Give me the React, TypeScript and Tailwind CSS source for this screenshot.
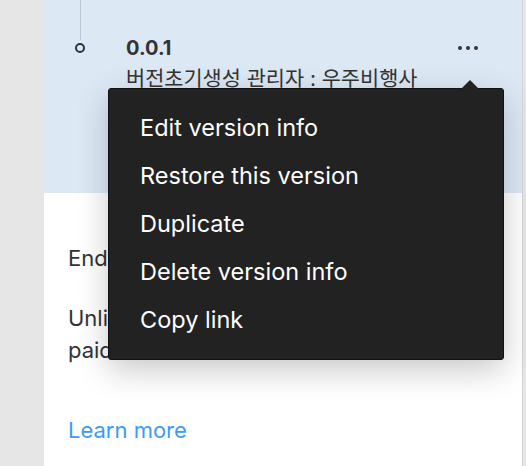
import React from "react";

const menuItems = [
  "Edit version info",
  "Restore this version",
  "Duplicate",
  "Delete version info",
  "Copy link",
];

export default function App() {
  return (
    <div
      className="relative flex h-[466px] w-[526px] overflow-hidden bg-[#e6e6e6]"
      style={{ fontFamily: "Inter, 'Noto Sans CJK KR', sans-serif" }}
    >
      <div className="w-[44px] shrink-0" />
      <div className="flex w-[479px] flex-col border-r border-[#d4d4d4] bg-white">
        {/* current version */}
        <div className="flex h-[193px] bg-[#dce9f5]">
          <div className="flex w-[72px] flex-col items-center">
            <div className="h-[40px] w-px bg-[#b9c6d3]" />
            <div className="mt-[3px] h-[10px] w-[10px] rounded-full border-2 border-[#333] bg-[#dce9f5]" />
          </div>
          <div className="flex flex-1 flex-col pt-[34px] pl-[10px]">
            <div className="flex items-center justify-between pr-[44px]">
              <span className="text-[20px] font-bold leading-[28px] text-[#333]">0.0.1</span>
              <div className="flex gap-[4px]">
                <span className="h-[4px] w-[4px] rounded-full bg-[#333]" />
                <span className="h-[4px] w-[4px] rounded-full bg-[#333]" />
                <span className="h-[4px] w-[4px] rounded-full bg-[#333]" />
              </div>
            </div>
            <div className="mt-[3px] text-[20.8px] leading-[28px] text-[#333]">
              버전초기생성 관리자 : 우주비행사
            </div>
          </div>
        </div>

        {/* footer info */}
        <div className="flex flex-col px-[24px] pt-[50px] text-[22px] text-[#333]">
          <p className="leading-[30px]">End of version history</p>
          <p className="mt-[29px] leading-[32px]">
            Unlimited version history is in
            <br />
            paid teams.
          </p>
          <a className="mt-[49px] text-[22px] leading-[30px] text-[#3c9cf2]">Learn more</a>
        </div>
      </div>

      {/* dropdown menu */}
      <div className="absolute left-[108px] top-[88px] w-[396px] rounded-[3px] border border-[#111] bg-[#222] py-[15px] shadow-[0_10px_32px_rgba(0,0,0,0.22)]">
        <div className="absolute -top-[9px] left-[352px] h-0 w-0 border-x-[9px] border-b-[9px] border-x-transparent border-b-[#222]" />
        {menuItems.map((item) => (
          <div
            key={item}
            className="flex h-[48px] items-center pl-[31px] text-[23.5px] text-white"
          >
            {item}
          </div>
        ))}
      </div>
    </div>
  );
}
